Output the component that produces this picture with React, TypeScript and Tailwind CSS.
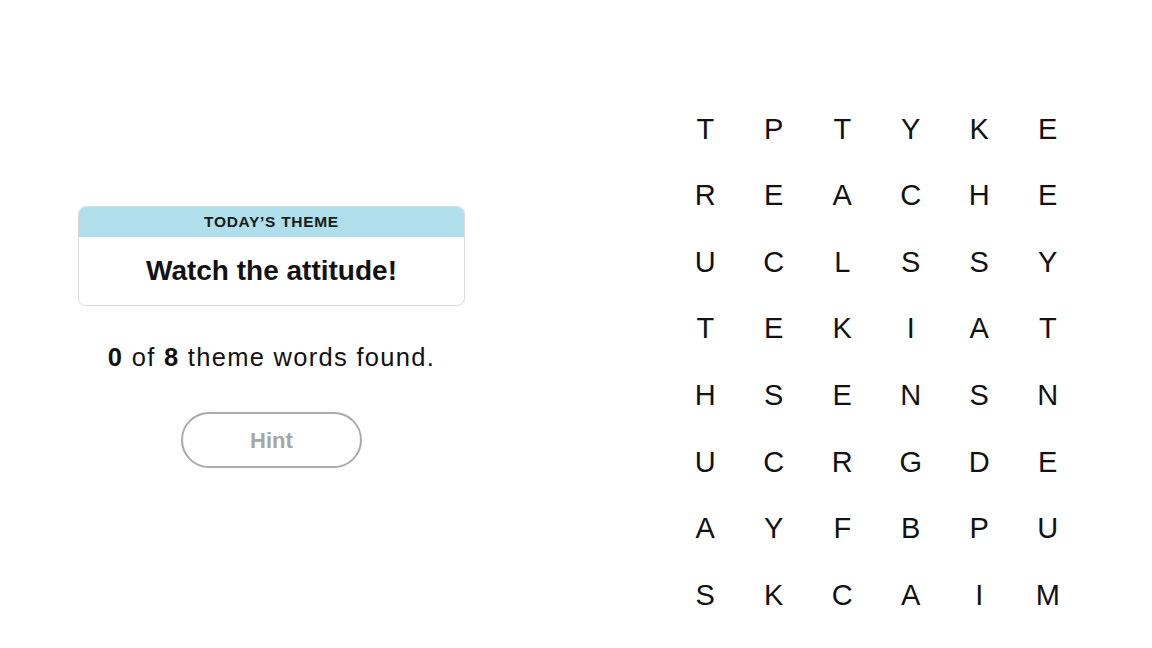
import React from "react";

const GRID = [
  "TPTYKE",
  "REACHE",
  "UCLSSY",
  "TEKIAT",
  "HSENSN",
  "UCRGDE",
  "AYFBPU",
  "SKCAIM",
];

export default function App() {
  return (
    <div
      className="w-[1152px] h-[648px] bg-white flex text-[#121212]"
      style={{ fontFamily: '"Liberation Sans", Arial, sans-serif' }}
    >
      <div className="w-[543px] flex flex-col items-center pt-[206px]">
        <div className="w-[387px] rounded-lg border border-[#dcdcdc] overflow-hidden">
          <div className="h-[30px] bg-[#aedfeb] flex items-center justify-center text-[15.5px] font-bold tracking-[0.045em] uppercase text-[#1a1a1a]">
            Today’s Theme
          </div>
          <div className="h-[68px] flex items-center justify-center text-[28px] font-bold text-[#121212]">
            Watch the attitude!
          </div>
        </div>
        <div className="mt-[36px] text-[25.5px] leading-[30px] tracking-[1.3px] text-[#121212]">
          <span className="font-bold">0</span> of <span className="font-bold">8</span> theme words found.
        </div>
        <button className="mt-[40px] w-[181px] h-[56px] rounded-full border-2 border-[#aaaaaa] text-[22px] font-bold text-[#a6a6a6] flex items-center justify-center">
          Hint
        </button>
      </div>
      <div className="ml-[128px] pt-[96px]">
        <div className="grid grid-cols-6 w-[411px]">
          {GRID.flatMap((row, r) =>
            row.split("").map((ch, c) => (
              <div
                key={`${r}-${c}`}
                className="h-[66.6px] flex items-center justify-center text-[29px] text-[#121212]"
              >
                {ch}
              </div>
            ))
          )}
        </div>
      </div>
    </div>
  );
}
